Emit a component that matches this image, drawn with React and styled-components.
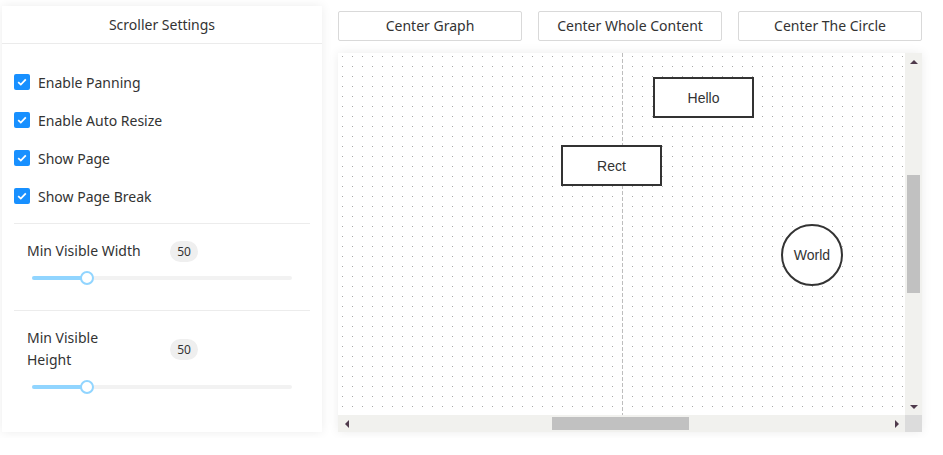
import React from "react";
import styled, { createGlobalStyle } from "styled-components";

const GlobalStyle = createGlobalStyle`
  html, body {
    margin: 0;
    padding: 0;
    background: #ffffff;
  }
  body {
    font-family: "Noto Sans", "Open Sans", sans-serif;
    color: #333333;
  }
`;

const checks = ["Enable Panning", "Enable Auto Resize", "Show Page", "Show Page Break"];
const buttons = ["Center Graph", "Center Whole Content", "Center The Circle"];

export default function App() {
  return (
    <>
      <GlobalStyle />
      <Page>
        <Panel>
          <PanelHeader>Scroller Settings</PanelHeader>
          <PanelBody>
            {checks.map((label) => (
              <CheckRow key={label}>
                <CheckBox>
                  <svg width="10" height="8" viewBox="0 0 10 8">
                    <path d="M1.2 4.2 L3.8 6.6 L8.8 1.4" fill="none" stroke="#fff" strokeWidth="1.8" />
                  </svg>
                </CheckBox>
                {label}
              </CheckRow>
            ))}
            <Divider gap={8} />
            <SliderSection>
              <LabelRow>
                <SliderLabel>Min Visible Width</SliderLabel>
                <Badge>50</Badge>
              </LabelRow>
              <Slider fill={55} />
            </SliderSection>
            <Divider gap={0} />
            <SliderSection>
              <LabelRow>
                <SliderLabel>
                  Min Visible
                  <br />
                  Height
                </SliderLabel>
                <Badge>50</Badge>
              </LabelRow>
              <Slider fill={55} />
            </SliderSection>
          </PanelBody>
        </Panel>
        <Main>
          <ButtonBar>
            {buttons.map((b) => (
              <ActionButton key={b}>{b}</ActionButton>
            ))}
          </ButtonBar>
          <GraphBox>
            <Canvas>
              <GridSvg width="567" height="362">
                <defs>
                  <pattern id="dots" x="4" y="3" width="10" height="10" patternUnits="userSpaceOnUse">
                    <rect width="1" height="1" fill="#a8a8a8" />
                  </pattern>
                </defs>
                <rect width="567" height="362" fill="url(#dots)" />
                <rect x="283" width="3" height="362" fill="#ffffff" />
                <line x1="284.5" y1="0" x2="284.5" y2="362" stroke="#bdbdbd" strokeDasharray="4 2" />
              </GridSvg>
              <RectNode left={315} top={24}>Hello</RectNode>
              <RectNode left={223} top={92}>Rect</RectNode>
              <CircleNode left={443} top={171}>World</CircleNode>
            </Canvas>
            <VTrack>
              <Arrow dir="up" />
              <VThumb />
              <Arrow dir="down" />
            </VTrack>
            <HTrack>
              <Arrow dir="left" />
              <HThumb />
              <Arrow dir="right" />
            </HTrack>
            <Corner />
          </GraphBox>
        </Main>
      </Page>
    </>
  );
}

function Slider({ fill }) {
  return (
    <SliderTrack>
      <SliderFill style={{ width: fill }} />
      <SliderHandle style={{ left: fill - 7 }} />
    </SliderTrack>
  );
}

function Arrow({ dir }) {
  const paths = {
    up: "M1 6 L5 2 L9 6 Z",
    down: "M1 2 L5 6 L9 2 Z",
    left: "M6 1 L2 5 L6 9 Z",
    right: "M2 1 L6 5 L2 9 Z",
  };
  const vertical = dir === "up" || dir === "down";
  return (
    <ArrowBox>
      <svg width={vertical ? 10 : 8} height={vertical ? 8 : 10} viewBox={vertical ? "0 0 10 8" : "0 0 8 10"}>
        <path d={paths[dir]} fill="#4f3a4c" />
      </svg>
    </ArrowBox>
  );
}

const Page = styled.div`
  display: flex;
  gap: 16px;
  padding: 6px 2px;
`;

const Panel = styled.div`
  width: 320px;
  height: 426px;
  background: #ffffff;
  box-shadow: 0 0 10px rgba(0, 0, 0, 0.08);
  display: flex;
  flex-direction: column;
`;

const PanelHeader = styled.div`
  height: 38px;
  border-bottom: 1px solid #ebebeb;
  display: flex;
  align-items: center;
  justify-content: center;
  font-size: 14px;
  color: #333;
  box-sizing: border-box;
`;

const PanelBody = styled.div`
  padding: 19px 12px 0;
`;

const CheckRow = styled.div`
  height: 38px;
  display: flex;
  align-items: center;
  gap: 8px;
  font-size: 14px;
  color: #333;
`;

const CheckBox = styled.span`
  width: 16px;
  height: 16px;
  border-radius: 2px;
  background: #1890ff;
  display: flex;
  align-items: center;
  justify-content: center;
`;

const Divider = styled.div`
  height: 1px;
  background: #ececec;
  margin-top: ${(p) => p.gap}px;
`;

const SliderSection = styled.div`
  padding: 16px 0 30px;
`;

const LabelRow = styled.div`
  display: flex;
  align-items: center;
  padding-left: 13px;
`;

const SliderLabel = styled.div`
  width: 143px;
  font-size: 14px;
  line-height: 22px;
  color: #333;
`;

const Badge = styled.span`
  width: 28px;
  height: 21px;
  border-radius: 11px;
  background: #efefef;
  font-size: 12px;
  color: #333;
  display: flex;
  align-items: center;
  justify-content: center;
`;

const SliderTrack = styled.div`
  position: relative;
  margin: 14px 18px 0;
  height: 4px;
  border-radius: 2px;
  background: #f2f2f2;
`;

const SliderFill = styled.div`
  height: 4px;
  border-radius: 2px;
  background: #91d5ff;
`;

const SliderHandle = styled.div`
  position: absolute;
  top: -5px;
  width: 14px;
  height: 14px;
  box-sizing: border-box;
  border-radius: 50%;
  border: 2px solid #91d5ff;
  background: #ffffff;
`;

const Main = styled.div`
  padding-top: 5px;
  display: flex;
  flex-direction: column;
  gap: 12px;
`;

const ButtonBar = styled.div`
  display: flex;
  gap: 16px;
`;

const ActionButton = styled.button`
  width: 184px;
  height: 30px;
  background: #ffffff;
  border: 1px solid #d9d9d9;
  border-radius: 2px;
  font-family: "Noto Sans", "Open Sans", sans-serif;
  font-size: 14px;
  color: #333;
  padding: 0 0 2px;
`;

const GraphBox = styled.div`
  width: 584px;
  height: 379px;
  display: grid;
  grid-template-columns: 567px 17px;
  grid-template-rows: 362px 17px;
  box-shadow: 0 0 10px rgba(0, 0, 0, 0.08);
`;

const Canvas = styled.div`
  position: relative;
  background: #ffffff;
  overflow: hidden;
  font-family: "Liberation Sans", Arial, sans-serif;
`;

const GridSvg = styled.svg`
  position: absolute;
  left: 0;
  top: 0;
`;

const RectNode = styled.div`
  position: absolute;
  left: ${(p) => p.left}px;
  top: ${(p) => p.top}px;
  width: 101px;
  height: 41px;
  box-sizing: border-box;
  border: 2px solid #333333;
  background: #ffffff;
  display: flex;
  align-items: center;
  justify-content: center;
  font-size: 14px;
  color: #333;
`;

const CircleNode = styled(RectNode)`
  width: 62px;
  height: 62px;
  border-radius: 50%;
`;

const VTrack = styled.div`
  background: #f1f1ee;
  display: flex;
  flex-direction: column;
  align-items: center;
  justify-content: space-between;
  position: relative;
`;

const HTrack = styled.div`
  background: #f1f1ee;
  display: flex;
  align-items: center;
  justify-content: space-between;
  position: relative;
`;

const VThumb = styled.div`
  position: absolute;
  left: 2px;
  top: 122px;
  width: 13px;
  height: 118px;
  background: #c1c1c1;
`;

const HThumb = styled.div`
  position: absolute;
  top: 2px;
  left: 214px;
  width: 137px;
  height: 13px;
  background: #c1c1c1;
`;

const ArrowBox = styled.div`
  width: 17px;
  height: 17px;
  display: flex;
  align-items: center;
  justify-content: center;
`;

const Corner = styled.div`
  background: #dcdcdc;
`;
